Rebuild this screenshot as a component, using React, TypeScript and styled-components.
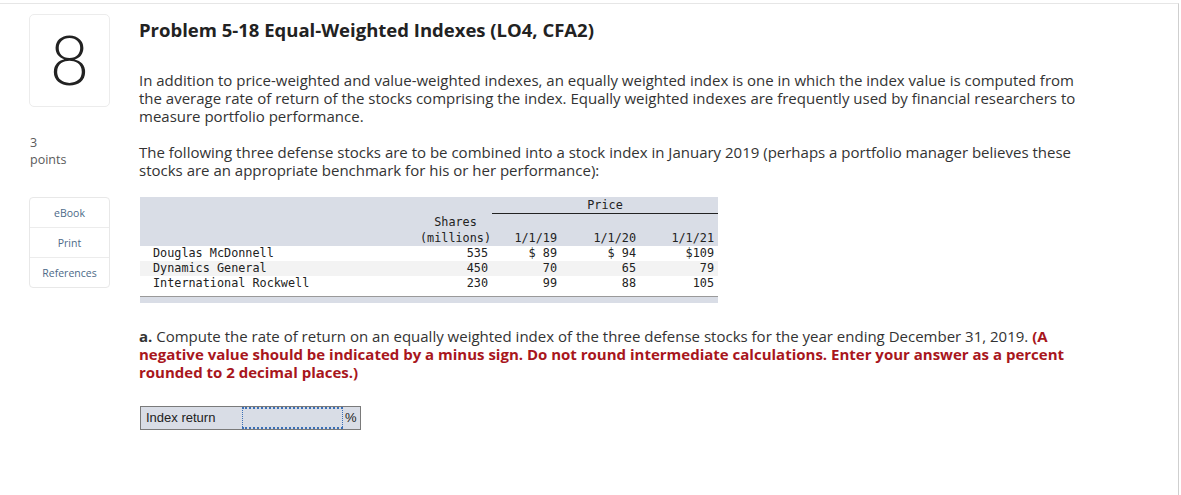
import React from 'react';
import styled, { createGlobalStyle } from 'styled-components';

const GlobalStyle = createGlobalStyle`
  body {
    margin: 0;
    background: #ffffff;
    font-family: "Open Sans", Lato, sans-serif;
    color: #333333;
  }
`;

const rows = [
  { name: 'Douglas McDonnell', shares: '535', p19: '$ 89', p20: '$ 94', p21: '$109' },
  { name: 'Dynamics General', shares: '450', p19: '70', p20: '65', p21: '79' },
  { name: 'International Rockwell', shares: '230', p19: '99', p20: '88', p21: '105' },
];

const App = () => {
  return (
    <Page>
      <GlobalStyle />
      <Sidebar>
        <NumberBox>8</NumberBox>
        <Points>
          <span>3</span>
          <span>points</span>
        </Points>
        <LinkBox>
          <LinkItem>eBook</LinkItem>
          <LinkItem>Print</LinkItem>
          <LinkItem>References</LinkItem>
        </LinkBox>
      </Sidebar>
      <Content>
        <Title>Problem 5-18 Equal-Weighted Indexes (LO4, CFA2)</Title>
        <Paragraph>
          In addition to price-weighted and value-weighted indexes, an equally weighted index is one in which the index value is computed from the average rate of return of the stocks comprising the index. Equally weighted indexes are frequently used by financial researchers to measure portfolio performance.
        </Paragraph>
        <Paragraph>
          The following three defense stocks are to be combined into a stock index in January 2019 (perhaps a portfolio manager believes these stocks are an appropriate benchmark for his or her performance):
        </Paragraph>
        <DataTable>
          <colgroup>
            <col style={{ width: 280 }} />
            <col style={{ width: 72 }} />
            <col style={{ width: 69 }} />
            <col style={{ width: 79 }} />
            <col style={{ width: 78 }} />
          </colgroup>
          <thead>
            <tr>
              <HeadCell />
              <HeadCell />
              <PriceCell colSpan={3}>Price</PriceCell>
            </tr>
            <tr>
              <HeadCell />
              <HeadCell align="right">
                <Centered>Shares<br />(millions)</Centered>
              </HeadCell>
              <HeadCell align="right">1/1/19</HeadCell>
              <HeadCell align="right">1/1/20</HeadCell>
              <HeadCell align="right">1/1/21</HeadCell>
            </tr>
          </thead>
          <tbody>
            {rows.map((r, i) => (
              <BodyRow key={r.name} $shade={i === 1}>
                <NameCell>{r.name}</NameCell>
                <NumCell><Centered>{r.shares}</Centered></NumCell>
                <NumCell>{r.p19}</NumCell>
                <NumCell>{r.p20}</NumCell>
                <NumCell>{r.p21}</NumCell>
              </BodyRow>
            ))}
            <SpacerRow>
              <td colSpan={5} />
            </SpacerRow>
            <FootRow>
              <td colSpan={5} />
            </FootRow>
          </tbody>
        </DataTable>
        <Question>
          <b>a.</b> Compute the rate of return on an equally weighted index of the three defense stocks for the year ending December 31, 2019.{' '}
          <Warn>(A negative value should be indicated by a minus sign. Do not round intermediate calculations. Enter your answer as a percent rounded to 2 decimal places.)</Warn>
        </Question>
        <AnswerRow>
          <AnswerLabel>Index return</AnswerLabel>
          <AnswerInput />
          <Unit>%</Unit>
        </AnswerRow>
      </Content>
    </Page>
  );
};

export default App;

const Page = styled.div`
  display: flex;
  height: 492px;
  box-sizing: border-box;
  margin-top: 3px;
  border-top: 1px solid #e6e6e6;
  border-right: 1px solid #cfcfcf;
  width: 1179px;
`;

const Sidebar = styled.div`
  width: 110px;
  padding: 10px 0 0 29px;
  display: flex;
  flex-direction: column;
  flex-shrink: 0;
`;

const NumberBox = styled.div`
  width: 81px;
  height: 93px;
  box-sizing: border-box;
  border: 1px solid #ececec;
  border-radius: 5px;
  display: flex;
  align-items: center;
  justify-content: center;
  font-family: Lato, sans-serif;
  font-size: 68px;
  font-weight: 300;
  color: #222222;
  line-height: 1;
  padding-bottom: 4px;
`;

const Points = styled.div`
  display: flex;
  flex-direction: column;
  margin-top: 27px;
  margin-left: 1px;
  font-size: 12.5px;
  line-height: 17px;
  color: #5a5a5a;
`;

const LinkBox = styled.div`
  margin-top: 29px;
  width: 81px;
  box-sizing: border-box;
  border: 1px solid #e8e8e8;
  border-radius: 4px;
  display: flex;
  flex-direction: column;
`;

const LinkItem = styled.div`
  height: 29px;
  display: flex;
  align-items: center;
  justify-content: center;
  font-size: 10.5px;
  color: #4d6a88;
  border-top: 1px solid #ececec;
  &:first-child {
    border-top: none;
  }
`;

const Content = styled.div`
  flex: 1;
  padding: 14px 0 0 0;
`;

const Title = styled.h1`
  margin: 0;
  font-size: 18.5px;
  font-weight: 700;
  color: #222222;
  line-height: 24px;
`;

const Paragraph = styled.p`
  margin: 0 0 18px 0;
  width: 945px;
  font-size: 15px;
  line-height: 18px;
  color: #333333;
  &:first-of-type {
    margin-top: 29px;
  }
`;

const DataTable = styled.table`
  margin: 8px 0 0 1px;
  width: 578px;
  border-collapse: collapse;
  table-layout: fixed;
  font-family: "DejaVu Sans Mono", "Liberation Mono", monospace;
  font-size: 11.8px;
  color: #222222;
  thead tr {
    background: #d9dde6;
  }
`;

const HeadCell = styled.th`
  font-weight: 400;
  padding: 0 4px 0 0;
  line-height: 16px;
  vertical-align: bottom;
`;

const PriceCell = styled.th`
  font-weight: 400;
  height: 16px;
  line-height: 16px;
  padding: 0;
  text-align: center;
  border-bottom: 1px solid #222222;
`;

const Centered = styled.span`
  display: inline-block;
  text-align: center;
`;

const BodyRow = styled.tr<{ $shade: boolean }>`
  background: ${p => (p.$shade ? '#f3f3f3' : '#ffffff')};
  height: 15px;
`;

const NameCell = styled.td`
  padding: 0 0 0 13px;
  line-height: 15px;
  white-space: nowrap;
`;

const NumCell = styled.td`
  padding: 0 4px 0 0;
  text-align: right;
  line-height: 15px;
`;

const SpacerRow = styled.tr`
  height: 6px;
`;

const FootRow = styled.tr`
  height: 6px;
  background: #d9dde6;
  border-top: 1px solid #9a9a9a;
`;

const Question = styled.p`
  margin: 24px 0 0 0;
  width: 945px;
  font-size: 15px;
  line-height: 18px;
  color: #333333;
  b {
    font-weight: 700;
  }
`;

const Warn = styled.span`
  color: #a8161c;
  font-weight: 700;
`;

const AnswerRow = styled.div`
  display: flex;
  margin: 25px 0 0 1px;
  width: 221px;
  height: 24px;
  box-sizing: border-box;
  border: 1px solid #7a7a7a;
  background: #d9dde6;
  font-family: "Liberation Sans", Arial, sans-serif;
  font-size: 13px;
  color: #222222;
`;

const AnswerLabel = styled.div`
  width: 101px;
  padding-left: 5px;
  box-sizing: border-box;
  display: flex;
  align-items: center;
`;

const AnswerInput = styled.div`
  width: 101px;
  box-sizing: border-box;
  border-width: 2px 1px;
  border-style: dotted;
  border-color: #3b6fb6;
`;

const Unit = styled.div`
  flex: 1;
  display: flex;
  align-items: center;
  padding-left: 2px;
`;
